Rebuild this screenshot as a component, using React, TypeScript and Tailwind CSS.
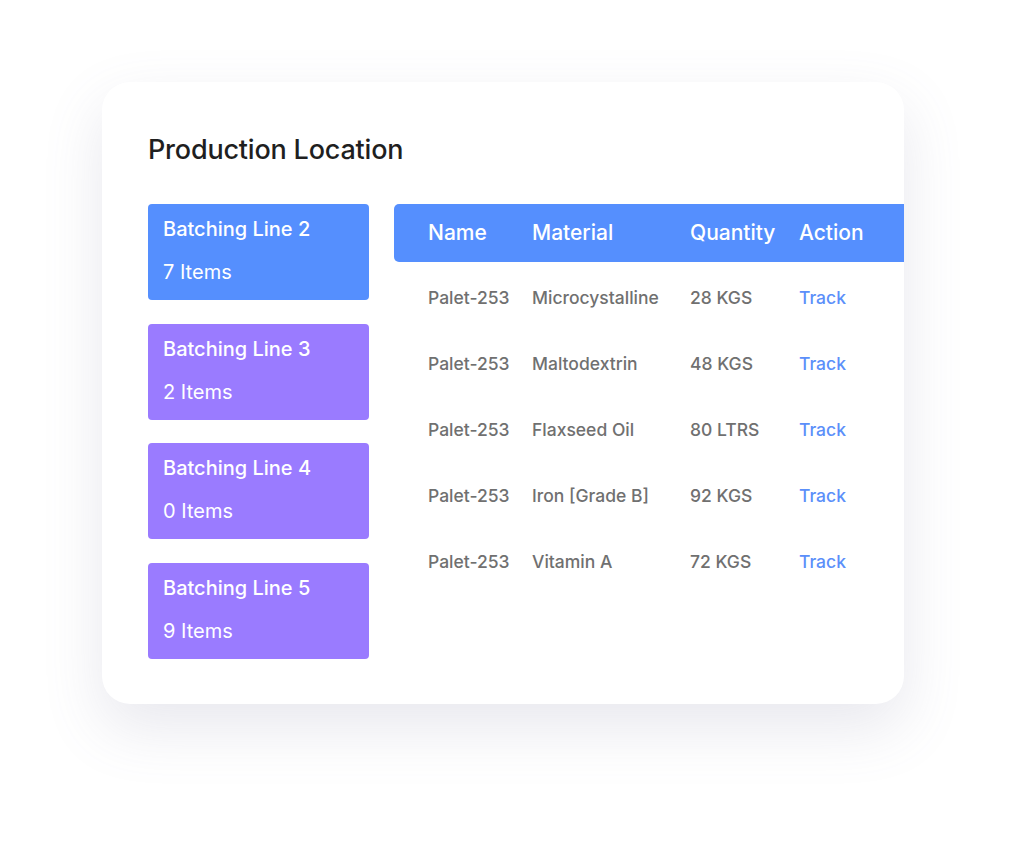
import React from "react"

const lines = [
	{ name: "Batching Line 2", count: 7, active: true },
	{ name: "Batching Line 3", count: 2, active: false },
	{ name: "Batching Line 4", count: 0, active: false },
	{ name: "Batching Line 5", count: 9, active: false },
]

const rows = [
	{ name: "Palet-253", material: "Microcystalline", qty: "28 KGS" },
	{ name: "Palet-253", material: "Maltodextrin", qty: "48 KGS" },
	{ name: "Palet-253", material: "Flaxseed Oil", qty: "80 LTRS" },
	{ name: "Palet-253", material: "Iron [Grade B]", qty: "92 KGS" },
	{ name: "Palet-253", material: "Vitamin A", qty: "72 KGS" },
]

export default function App() {
	return (
		<div className="w-[1024px] h-[844px] bg-white pt-[82px] pl-[102px] font-['Inter',sans-serif]">
			<div className="w-[802px] h-[622px] bg-white rounded-[28px] overflow-hidden shadow-[0_24px_60px_rgba(110,115,150,0.16)] pt-[52px] pl-[46px]">
				<h1 className="text-[27px] leading-[32px] font-medium tracking-[-0.2px] text-[#1f1f1f]">Production Location</h1>

				<div className="flex gap-[25px] mt-[38px]">
					{/* batching lines */}
					<div className="flex flex-col gap-[23.5px] w-[221px] shrink-0">
						{lines.map(l => (
							<div
								key={l.name}
								className={
									"h-[96px] rounded-[4px] pl-[15px] pt-[13px] text-white " +
									(l.active ? "bg-[#558ffe]" : "bg-[#9a7bff]")
								}
							>
								<div className="text-[20px] leading-[24px] font-medium">{l.name}</div>
								<div className="text-[20px] leading-[24px] mt-[19px]">{l.count} Items</div>
							</div>
						))}
					</div>

					{/* table */}
					<div className="flex-1">
						<div className="h-[58px] bg-[#558ffe] rounded-l-[5px] pl-[34px] grid grid-cols-[104px_158px_109px_1fr] items-center text-white text-[21px] font-medium">
							<div>Name</div>
							<div>Material</div>
							<div>Quantity</div>
							<div>Action</div>
						</div>
						<div className="pt-[3px]">
							{rows.map((r, i) => (
								<div
									key={i}
									className="h-[66px] pl-[34px] grid grid-cols-[104px_158px_109px_1fr] items-center text-[17.5px] font-medium text-[#707070]"
								>
									<div>{r.name}</div>
									<div>{r.material}</div>
									<div>{r.qty}</div>
									<div className="text-[#5b8ffa]">Track</div>
								</div>
							))}
						</div>
					</div>
				</div>
			</div>
		</div>
	)
}
